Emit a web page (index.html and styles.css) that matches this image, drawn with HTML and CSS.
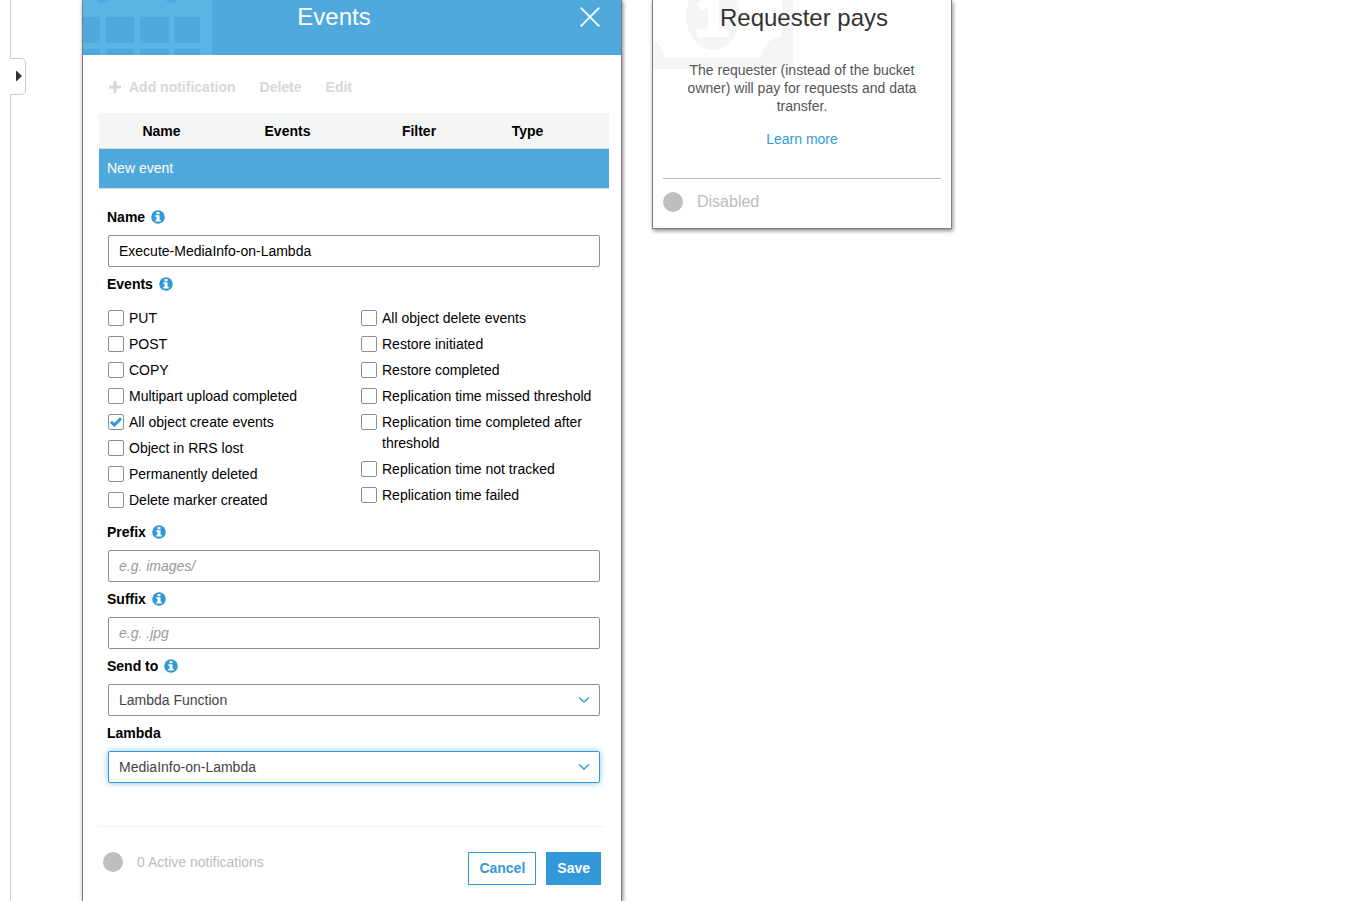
FILE: index.html
```html
<!DOCTYPE html>
<html lang="en">
<head>
<meta charset="utf-8">
<title>Events</title>
<link rel="stylesheet" href="styles.css">
</head>
<body>
<svg class="symbols" aria-hidden="true">
  <symbol id="info" viewBox="0 0 14 14">
    <circle cx="7" cy="7" r="6.800" fill="#3199d7"/>
    <path d="M5.500 2h3v2.200h-3zM4.400 5.200h4.100v4.500h1.200v1.900H4.400V9.700h1.200V7H4.400z" fill="#fff"/>
  </symbol>
  <symbol id="chevron" viewBox="0 0 12 8">
    <path d="M1 1.5l5 4.5 5-4.5" fill="none" stroke="#3199d7" stroke-width="1.4"/>
  </symbol>
</svg>
<div class="layout">
  <aside class="rail">
    <button class="rail-toggle" type="button" aria-label="Open navigation">
      <svg width="6" height="10" viewBox="0 0 6 10"><path d="M0 0h.6L6 5 .6 10H0z" fill="#333"/></svg>
    </button>
  </aside>
  <main class="tiles">
    <section class="panel">
      <header class="panel-head">
        <svg class="calendar" width="129" height="55" viewBox="0 0 129 55" aria-hidden="true">
          <path d="M0 0h129v55H0z" fill="#58b5e4"/>
          <path d="M0 17h17v26H0zM23 17h28v26H23zM57 17h29v26H57zM91 17h26v26H91zM0 49h17v6H0zM23 49h28v6H23zM57 49h29v6H57zM91 49h26v6H91zM14 0h12q-1 3-4 3h-4q-3 0-4-3zM83 0h11q-1 3-4 3h-3q-3 0-4-3z" fill="#4fa9dd"/>
        </svg>
        <h1>Events</h1>
        <button class="close" type="button" aria-label="Close">
          <svg width="20" height="20" viewBox="0 0 20 20"><path d="M.7.7l18.6 18.6M19.3.7L.7 19.3" stroke="#fff" stroke-width="1.8"/></svg>
        </button>
      </header>
      <div class="toolbar">
        <button type="button" disabled><svg width="12" height="12" viewBox="0 0 12 12"><path d="M4.5 0h3v4.5H12v3H7.5V12h-3V7.5H0v-3h4.5z" fill="#d5d8d8"/></svg>Add notification</button>
        <button type="button" disabled>Delete</button>
        <button type="button" disabled>Edit</button>
      </div>
      <table class="events">
        <colgroup><col class="c-name"><col class="c-events"><col class="c-filter"><col class="c-type"><col></colgroup>
        <thead><tr><th>Name</th><th>Events</th><th>Filter</th><th>Type</th><td></td></tr></thead>
        <tbody><tr><td colspan="5">New event</td></tr></tbody>
      </table>
      <form class="form">
        <div class="field">
          <div class="field-label"><label for="name">Name</label><svg class="info"><use href="#info"/></svg></div>
          <input class="control" id="name" type="text" value="Execute-MediaInfo-on-Lambda">
        </div>
        <fieldset class="field">
          <legend class="field-label"><span>Events</span><svg class="info"><use href="#info"/></svg></legend>
          <div class="checks">
            <div class="check-col">
              <label><input type="checkbox">PUT</label>
              <label><input type="checkbox">POST</label>
              <label><input type="checkbox">COPY</label>
              <label><input type="checkbox">Multipart upload completed</label>
              <label><input type="checkbox" checked><svg class="tick" width="12" height="10" viewBox="0 0 12 10"><path d="M1 4.800l3.400 3.200L11 1.300" fill="none" stroke="#3199d7" stroke-width="3"/></svg>All object create events</label>
              <label><input type="checkbox">Object in RRS lost</label>
              <label><input type="checkbox">Permanently deleted</label>
              <label><input type="checkbox">Delete marker created</label>
            </div>
            <div class="check-col">
              <label><input type="checkbox">All object delete events</label>
              <label><input type="checkbox">Restore initiated</label>
              <label><input type="checkbox">Restore completed</label>
              <label><input type="checkbox">Replication time missed threshold</label>
              <label><input type="checkbox">Replication time completed after threshold</label>
              <label><input type="checkbox">Replication time not tracked</label>
              <label><input type="checkbox">Replication time failed</label>
            </div>
          </div>
        </fieldset>
        <div class="field">
          <div class="field-label"><label for="prefix">Prefix</label><svg class="info"><use href="#info"/></svg></div>
          <input class="control" id="prefix" type="text" placeholder="e.g. images/">
        </div>
        <div class="field">
          <div class="field-label"><label for="suffix">Suffix</label><svg class="info"><use href="#info"/></svg></div>
          <input class="control" id="suffix" type="text" placeholder="e.g. .jpg">
        </div>
        <div class="field">
          <div class="field-label"><label for="send">Send to</label><svg class="info"><use href="#info"/></svg></div>
          <div class="select">
            <select class="control" id="send"><option>Lambda Function</option></select>
            <svg class="chevron"><use href="#chevron"/></svg>
          </div>
        </div>
        <div class="field">
          <div class="field-label"><label for="lambda">Lambda</label></div>
          <div class="select">
            <select class="control active" id="lambda"><option>MediaInfo-on-Lambda</option></select>
            <svg class="chevron"><use href="#chevron"/></svg>
          </div>
        </div>
      </form>
      <footer class="panel-foot">
        <div class="status"><span class="dot"></span>0 Active notifications</div>
        <div class="actions">
          <button class="btn" type="button">Cancel</button>
          <button class="btn primary" type="button">Save</button>
        </div>
      </footer>
    </section>
    <section class="card">
      <svg class="bill" width="140" height="69" viewBox="0 0 140 69" aria-hidden="true">
        <path d="M0 0h140v69H0z" fill="#f4f6f6"/>
        <path d="M0 0h129v37a21 21 0 0 0-21 21H11A21 21 0 0 0 0 40z" fill="#fff"/>
        <ellipse cx="60" cy="16" rx="27" ry="34" fill="#f4f6f6"/>
        <path d="M55 0h11v29h10v8H44v-8h11V7l-7 4-5-7 6-4z" fill="#fff"/>
      </svg>
      <h2>Requester pays</h2>
      <p>The requester (instead of the bucket owner) will pay for requests and data transfer.</p>
      <a href="#">Learn more</a>
      <div class="card-foot"><span class="dot"></span>Disabled</div>
    </section>
  </main>
</div>
</body>
</html>
```
FILE: styles.css
```css
* { box-sizing: border-box; }
body {
  margin: 0;
  background: #fff;
  color: #000;
  font: 14px/21px "Liberation Sans", Arial, sans-serif;
}
button, input, select { font: inherit; }
button { cursor: pointer; }
svg { display: block; flex: none; }
.symbols { position: absolute; width: 0; height: 0; }

.layout { display: flex; min-height: 100vh; }

.rail {
  flex: none;
  width: 11px;
  padding-top: 58px;
  border-right: 1px solid #ccc;
}
.rail-toggle {
  position: relative;
  display: flex;
  align-items: center;
  justify-content: flex-end;
  width: 16px;
  height: 37px;
  margin-left: 10px;
  padding: 0 3px 1px 0;
  background: #fff;
  border: 1px solid #ccc;
  border-left: 0;
  border-radius: 0 5px 5px 0;
}

.tiles {
  flex: 1;
  display: flex;
  align-items: stretch;
  gap: 30px;
  padding-left: 71px;
}

.panel {
  flex: 0 1 540px;
  border: solid #7d7d7d;
  border-width: 0 1px;
  box-shadow: 1px 1px 4px rgba(0, 0, 0, .5);
}
.panel-head {
  position: relative;
  display: flex;
  justify-content: center;
  height: 55px;
  background: #4fa9dd;
  color: #fff;
}
.calendar { position: absolute; left: 0; top: 0; }
.panel-head h1 {
  position: relative;
  margin: 0;
  padding: 3px 36px 0 0;
  font-size: 24px;
  line-height: 28px;
  font-weight: 400;
}
.close {
  position: absolute;
  top: 7px;
  right: 21px;
  padding: 0;
  background: none;
  border: 0;
}

.toolbar {
  display: flex;
  align-items: center;
  gap: 24px;
  height: 58px;
  padding: 6px 26px 0;
}
.toolbar button {
  display: flex;
  align-items: center;
  gap: 8px;
  padding: 0;
  background: none;
  border: 0;
  color: #d5d8d8;
  font-weight: 700;
}

.events {
  width: calc(100% - 28px);
  margin: 0 12px 0 16px;
  border-collapse: separate;
  border-spacing: 0;
  table-layout: fixed;
}
.c-name { width: 125px; }
.c-events { width: 127px; }
.c-filter { width: 136px; }
.c-type { width: 81px; }
.events th, .events td { border-bottom: 1px solid #d5d8d8; }
.events thead th, .events thead td {
  height: 36px;
  padding: 2px 0 0;
  background: #f4f6f6;
}
.events tbody td {
  height: 40px;
  padding: 0 8px;
  background: #4fa9dd;
  background-clip: padding-box;
  color: #fff;
}

.form { padding: 11px 21px 43px 25px; }
.field { margin: 0; padding: 0; border: 0; }
.field-label {
  display: flex;
  align-items: center;
  gap: 6px;
  height: 35px;
  margin-left: -1px;
  padding: 0;
  font-weight: 700;
}
.info { width: 14px; height: 14px; margin-bottom: 1px; }
.control {
  display: block;
  width: 100%;
  height: 32px;
  padding: 0 10px;
  background: #fff;
  border: 1px solid #879191;
  border-radius: 2px;
  color: #000;
  appearance: none;
  outline: 0;
}
.control::placeholder { color: #999; font-style: italic; opacity: 1; }
select.control { color: #444; }
.control.active {
  border-color: #3199d7;
  box-shadow: 0 0 6px rgba(49, 153, 215, .6);
}
.select { position: relative; }
.chevron {
  position: absolute;
  top: 12px;
  right: 10px;
  width: 12px;
  height: 8px;
  pointer-events: none;
}

.checks {
  display: grid;
  grid-template-columns: 253px 1fr;
  padding: 6px 0 4px;
}
.check-col { display: flex; flex-direction: column; gap: 5px; }
.check-col label {
  position: relative;
  display: flex;
  align-items: flex-start;
  gap: 5px;
}
.check-col input {
  flex: none;
  width: 16px;
  height: 16px;
  margin: 2px 0 0;
  border: 1px solid #879191;
  border-radius: 2px;
  background: #fff;
  appearance: none;
}
.tick { position: absolute; left: 2px; top: 5px; display: none; pointer-events: none; }
input:checked + .tick { display: block; }

.panel-foot {
  display: flex;
  justify-content: space-between;
  margin: 0 17px 0 16px;
  padding: 25px 3px 16px 4px;
  border-top: 1px solid #f0f2f2;
}
.status, .card-foot {
  display: flex;
  align-items: center;
  gap: 14px;
  color: #bbbdbd;
}
.status { height: 20px; }
.dot {
  flex: none;
  width: 20px;
  height: 20px;
  border-radius: 50%;
  background: #bdbfbf;
}
.actions { display: flex; gap: 10px; }
.btn {
  height: 33px;
  padding: 0 10px;
  background: #fff;
  border: 1px solid #3199d7;
  color: #3199d7;
  font-weight: 700;
}
.btn.primary { background: #3199d7; color: #fff; }

.card {
  position: relative;
  flex: 0 1 300px;
  align-self: flex-start;
  padding: 0 10px 16px;
  border: 1px solid #7d7d7d;
  border-top: 0;
  box-shadow: 1px 2px 4px rgba(0, 0, 0, .45);
  text-align: center;
}
.bill { position: absolute; left: 0; top: 0; }
.card h2 {
  position: relative;
  margin: 0;
  padding: 4px 0 0 4px;
  color: #333;
  font-size: 24px;
  line-height: 28px;
  font-weight: 400;
}
.card p {
  position: relative;
  margin: 29px 20px 15px;
  color: #555;
  line-height: 18px;
}
.card a {
  display: block;
  color: #3199d7;
  line-height: 18px;
  text-decoration: none;
}
.card-foot {
  margin-top: 30px;
  padding-top: 13px;
  border-top: 1px solid #bbbdbd;
  font-size: 16px;
  line-height: 20px;
}
```
